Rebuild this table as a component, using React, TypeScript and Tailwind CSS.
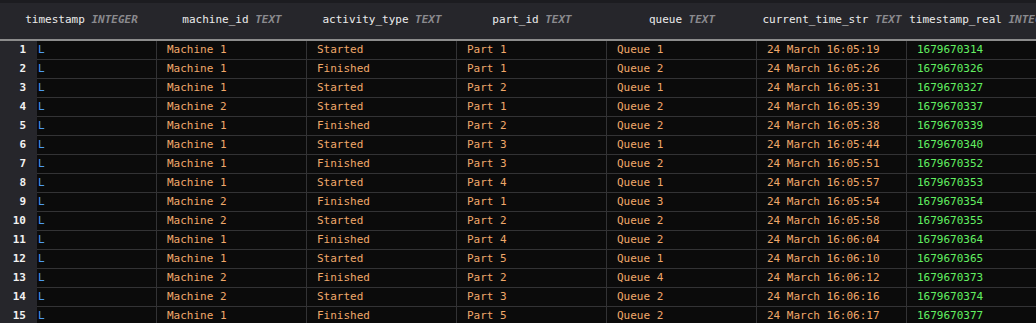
import React from "react"

type Row = {
  machine: string
  activity: string
  part: string
  queue: string
  time: string
  real: string
}

const rows: Row[] = [
  { machine: "Machine 1", activity: "Started", part: "Part 1", queue: "Queue 1", time: "24 March 16:05:19", real: "1679670314" },
  { machine: "Machine 1", activity: "Finished", part: "Part 1", queue: "Queue 2", time: "24 March 16:05:26", real: "1679670326" },
  { machine: "Machine 1", activity: "Started", part: "Part 2", queue: "Queue 1", time: "24 March 16:05:31", real: "1679670327" },
  { machine: "Machine 2", activity: "Started", part: "Part 1", queue: "Queue 2", time: "24 March 16:05:39", real: "1679670337" },
  { machine: "Machine 1", activity: "Finished", part: "Part 2", queue: "Queue 2", time: "24 March 16:05:38", real: "1679670339" },
  { machine: "Machine 1", activity: "Started", part: "Part 3", queue: "Queue 1", time: "24 March 16:05:44", real: "1679670340" },
  { machine: "Machine 1", activity: "Finished", part: "Part 3", queue: "Queue 2", time: "24 March 16:05:51", real: "1679670352" },
  { machine: "Machine 1", activity: "Started", part: "Part 4", queue: "Queue 1", time: "24 March 16:05:57", real: "1679670353" },
  { machine: "Machine 2", activity: "Finished", part: "Part 1", queue: "Queue 3", time: "24 March 16:05:54", real: "1679670354" },
  { machine: "Machine 2", activity: "Started", part: "Part 2", queue: "Queue 2", time: "24 March 16:05:58", real: "1679670355" },
  { machine: "Machine 1", activity: "Finished", part: "Part 4", queue: "Queue 2", time: "24 March 16:06:04", real: "1679670364" },
  { machine: "Machine 1", activity: "Started", part: "Part 5", queue: "Queue 1", time: "24 March 16:06:10", real: "1679670365" },
  { machine: "Machine 2", activity: "Finished", part: "Part 2", queue: "Queue 4", time: "24 March 16:06:12", real: "1679670373" },
  { machine: "Machine 2", activity: "Started", part: "Part 3", queue: "Queue 2", time: "24 March 16:06:16", real: "1679670374" },
  { machine: "Machine 1", activity: "Finished", part: "Part 5", queue: "Queue 2", time: "24 March 16:06:17", real: "1679670377" },
]

const headers = [
  { name: "machine_id", type: "TEXT" },
  { name: "activity_type", type: "TEXT" },
  { name: "part_id", type: "TEXT" },
  { name: "queue", type: "TEXT" },
  { name: "current_time_str", type: "TEXT" },
  { name: "timestamp_real", type: "INTEGER" },
]

function HeadCell({ name, type }: { name: string; type: string }) {
  return (
    <div className="flex w-[150px] shrink-0 items-center justify-center whitespace-nowrap">
      <span className="text-[#ececec]">{name}</span>
      <span className="ml-[6.6px] font-bold italic text-[#8a8a8e]">{type}</span>
    </div>
  )
}

function Cell({ children, color }: { children: React.ReactNode; color: string }) {
  return (
    <div
      className={`flex w-[150px] shrink-0 items-center whitespace-nowrap border-r border-[#333335] pl-[10px] ${color}`}
    >
      {children}
    </div>
  )
}

export default function App() {
  return (
    <div
      className="h-[323px] w-[1036px] overflow-hidden bg-[#1c1c20] text-[11px]"
      style={{ fontFamily: '"DejaVu Sans Mono", "Liberation Mono", monospace' }}
    >
      <div className="h-[3px]" />
      {/* header */}
      <div className="flex h-[38px] border-b-2 border-[#8c8c8c] bg-[#26262b] pb-[1px]">
        <div className="flex w-[157px] shrink-0 items-center justify-center whitespace-nowrap pl-[6px]">
          <span className="text-[#ececec]">timestamp</span>
          <span className="ml-[6.6px] font-bold italic text-[#8a8a8e]">INTEGER</span>
        </div>
        {headers.map((h) => (
          <HeadCell key={h.name} name={h.name} type={h.type} />
        ))}
      </div>
      {/* body */}
      <div className="flex">
        <div className="w-[37px] shrink-0 bg-[#26262b]">
          {rows.map((_, i) => (
            <div
              key={i}
              className="flex h-[19px] items-center justify-end pr-[11px] font-bold text-[#f2f2f2]"
            >
              {i + 1}
            </div>
          ))}
        </div>
        <div className="flex-1 bg-[#0b0b0b]">
          {rows.map((r, i) => (
            <div key={i} className="flex h-[19px] border-b border-[#333335]">
              <div className="flex w-[120px] shrink-0 items-center border-r border-[#333335] pl-[1px] text-[#4d9cf0]">
                L
              </div>
              <Cell color="text-[#f0a86a]">{r.machine}</Cell>
              <Cell color="text-[#f0a86a]">{r.activity}</Cell>
              <Cell color="text-[#f0a86a]">{r.part}</Cell>
              <Cell color="text-[#f0a86a]">{r.queue}</Cell>
              <Cell color="text-[#f0a86a]">{r.time}</Cell>
              <Cell color="text-[#62f062]">{r.real}</Cell>
            </div>
          ))}
        </div>
      </div>
    </div>
  )
}
